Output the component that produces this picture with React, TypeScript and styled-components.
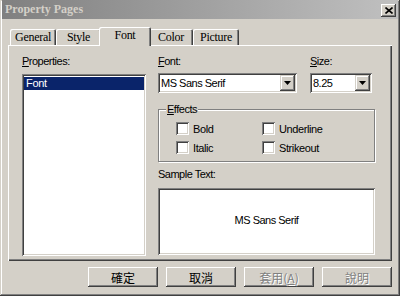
import React from "react";
import styled, { createGlobalStyle } from "styled-components";

const Global = createGlobalStyle`
  html, body { margin: 0; padding: 0; background: #d4d0c8; }
  body { width: 400px; height: 296px; overflow: hidden; }
`;

const ui = `"Liberation Sans", Arial, sans-serif`;
const serif = `"Liberation Serif", "Times New Roman", serif`;
const cjk = `"Noto Sans CJK TC", "Liberation Sans", sans-serif`;

const Window = styled.div`
  box-sizing: border-box;
  width: 400px;
  height: 296px;
  background: #d4d0c8;
  padding: 0 2px 2px 2px;
  box-shadow: inset -1px -1px #404040, inset 1px 1px #d4d0c8,
    inset -2px -2px #808080, inset 2px 2px #fff;
  display: flex;
  flex-direction: column;
`;

const TitleBar = styled.div`
  height: 19px;
  display: flex;
  align-items: flex-start;
  justify-content: space-between;
  padding: 0 2px 0 3px;
  background: linear-gradient(to right, #808080, #c0c0c0);
`;

const Title = styled.span`
  font-family: ${serif};
  font-weight: bold;
  font-size: 12px;
  line-height: 19px;
  color: #d4d0c8;
`;

const CloseButton = styled.div`
  width: 15px;
  height: 13px;
  margin-top: 4px;
  background: #d4d0c8;
  box-shadow: inset -1px -1px #404040, inset 1px 1px #fff,
    inset -2px -2px #808080;
  display: flex;
  align-items: center;
  justify-content: center;
`;

const Body = styled.div`
  display: flex;
  flex-direction: column;
  padding: 8px 6px 0 6px;
`;

const TabStrip = styled.div`
  display: flex;
  align-items: flex-end;
  height: 18px;
  padding-left: 2px;
  position: relative;
  z-index: 1;
`;

const Tab = styled.div<{ $w: number; $active?: boolean }>`
  box-sizing: border-box;
  width: ${(p) => p.$w}px;
  height: ${(p) => (p.$active ? 19 : 16)}px;
  margin: ${(p) => (p.$active ? "0 -2px -1px -2px" : "0")};
  padding-bottom: ${(p) => (p.$active ? 3 : 0)}px;
  background: #d4d0c8;
  border-radius: 2px 2px 0 0;
  box-shadow: inset 1px 1px #fff, inset -1px 0 #404040, inset -2px 0 #808080;
  font-family: ${serif};
  font-size: 12px;
  letter-spacing: -0.3px;
  color: #000;
  display: flex;
  align-items: center;
  justify-content: center;
  position: relative;
  z-index: ${(p) => (p.$active ? 2 : 1)};
`;

const Panel = styled.div`
  box-sizing: border-box;
  height: 216px;
  padding: 10px 0 0 14px;
  display: flex;
  gap: 12px;
  box-shadow: inset 1px 1px #fff, inset -1px -1px #404040,
    inset -2px -2px #808080;
`;

const Column = styled.div<{ $w: number }>`
  width: ${(p) => p.$w}px;
  display: flex;
  flex-direction: column;
`;

const Label = styled.div<{ $mb?: number; $mt?: number }>`
  font-family: ${ui};
  font-size: 11px;
  letter-spacing: -0.5px;
  line-height: 13px;
  height: 13px;
  color: #000;
  margin-top: ${(p) => p.$mt ?? 0}px;
  margin-bottom: ${(p) => p.$mb ?? 0}px;
  white-space: nowrap;
`;

const sunken = `
  background: #fff;
  box-shadow: inset 1px 1px #808080, inset -1px -1px #fff,
    inset 2px 2px #404040, inset -2px -2px #d4d0c8;
`;

const ListBox = styled.div`
  box-sizing: border-box;
  height: 182px;
  padding: 2px;
  ${sunken}
`;

const ListItem = styled.div<{ $selected?: boolean }>`
  height: 13px;
  margin-top: 1px;
  padding-left: 2px;
  font-family: ${ui};
  font-size: 11px;
  letter-spacing: -0.3px;
  line-height: 13px;
  background: ${(p) => (p.$selected ? "#0a246a" : "transparent")};
  color: ${(p) => (p.$selected ? "#fff" : "#000")};
`;

const TopRow = styled.div`
  display: flex;
  gap: 13px;
`;

const Combo = styled.div`
  box-sizing: border-box;
  height: 20px;
  padding: 2px;
  display: flex;
  align-items: center;
  ${sunken}
`;

const ComboText = styled.span`
  flex: 1;
  padding-left: 1px;
  font-family: ${ui};
  font-size: 11px;
  letter-spacing: -0.5px;
  color: #000;
  white-space: nowrap;
`;

const DropButton = styled.div`
  width: 15px;
  height: 16px;
  background: #d4d0c8;
  box-shadow: inset -1px -1px #404040, inset 1px 1px #d4d0c8,
    inset -2px -2px #808080, inset 2px 2px #fff;
  display: flex;
  align-items: center;
  justify-content: center;
`;

const Group = styled.fieldset`
  margin: 10px 0 0 0;
  padding: 0;
  min-inline-size: 0;
  border: 1px solid #808080;
  box-shadow: inset 1px 1px #fff, 1px 1px #fff;
`;

const CheckGrid = styled.div`
  display: grid;
  grid-template-columns: 86px 1fr;
  row-gap: 6px;
  padding: 6px 0 7px 17px;
`;

const Legend = styled.legend`
  margin-left: 7px;
  padding: 0 1px;
  background: #d4d0c8;
  font-family: ${ui};
  font-size: 11px;
  letter-spacing: -0.5px;
  line-height: 13px;
  color: #000;
`;

const CheckItem = styled.label`
  display: flex;
  align-items: center;
  gap: 4px;
  height: 13px;
  font-family: ${ui};
  font-size: 11px;
  letter-spacing: -0.4px;
  color: #000;
`;

const CheckBox = styled.span`
  box-sizing: border-box;
  width: 13px;
  height: 13px;
  flex: none;
  ${sunken}
`;

const SampleBox = styled.div`
  box-sizing: border-box;
  height: 67px;
  margin-top: 7px;
  display: flex;
  align-items: center;
  justify-content: center;
  padding-bottom: 3px;
  font-family: ${ui};
  font-size: 11px;
  letter-spacing: -0.5px;
  color: #000;
  ${sunken}
`;

const ButtonRow = styled.div`
  display: flex;
  justify-content: flex-end;
  gap: 8px;
  margin-top: 6px;
`;

const Button = styled.div<{ $disabled?: boolean }>`
  width: 70px;
  height: 20px;
  background: #d4d0c8;
  box-shadow: inset -1px -1px #404040, inset 1px 1px #fff,
    inset -2px -2px #808080, inset 2px 2px #d4d0c8;
  display: flex;
  align-items: center;
  justify-content: center;
  font-family: ${cjk};
  font-size: 12px;
  color: ${(p) => (p.$disabled ? "#808080" : "#000")};
  text-shadow: ${(p) => (p.$disabled ? "1px 1px #fff" : "none")};
`;

const Arrow = () => (
  <svg width="7" height="4" viewBox="0 0 7 4">
    <path d="M0 0H7L3.5 4Z" fill="#000" />
  </svg>
);

const CloseX = () => (
  <svg width="8" height="7" viewBox="0 0 8 7">
    <path d="M0.5 0.5L7.5 6.5M7.5 0.5L0.5 6.5" stroke="#000" strokeWidth="1.6" />
  </svg>
);

export default function App() {
  return (
    <>
      <Global />
      <Window>
        <TitleBar>
          <Title>Property Pages</Title>
          <CloseButton>
            <CloseX />
          </CloseButton>
        </TitleBar>
        <Body>
          <TabStrip>
            <Tab $w={46}>General</Tab>
            <Tab $w={45}>Style</Tab>
            <Tab $w={52} $active>
              Font
            </Tab>
            <Tab $w={44}>Color</Tab>
            <Tab $w={46}>Picture</Tab>
          </TabStrip>
          <Panel>
            <Column $w={124}>
              <Label $mb={6}>
                <u>P</u>roperties:
              </Label>
              <ListBox>
                <ListItem $selected>Font</ListItem>
              </ListBox>
            </Column>
            <Column $w={217}>
              <TopRow>
                <Column $w={139}>
                  <Label $mb={5}>
                    <u>F</u>ont:
                  </Label>
                  <Combo>
                    <ComboText>MS Sans Serif</ComboText>
                    <DropButton>
                      <Arrow />
                    </DropButton>
                  </Combo>
                </Column>
                <Column $w={62}>
                  <Label $mb={5}>
                    <u>S</u>ize:
                  </Label>
                  <Combo>
                    <ComboText>8.25</ComboText>
                    <DropButton>
                      <Arrow />
                    </DropButton>
                  </Combo>
                </Column>
              </TopRow>
              <Group>
                <Legend>
                  <u>E</u>ffects
                </Legend>
                <CheckGrid>
                  <CheckItem>
                    <CheckBox />
                    Bold
                  </CheckItem>
                  <CheckItem>
                    <CheckBox />
                    Underline
                  </CheckItem>
                  <CheckItem>
                    <CheckBox />
                    Italic
                  </CheckItem>
                  <CheckItem>
                    <CheckBox />
                    Strikeout
                  </CheckItem>
                </CheckGrid>
              </Group>
              <Label $mt={6}>Sample Text:</Label>
              <SampleBox>MS Sans Serif</SampleBox>
            </Column>
          </Panel>
          <ButtonRow>
            <Button>確定</Button>
            <Button>取消</Button>
            <Button $disabled>
              套用(<u>A</u>)
            </Button>
            <Button $disabled>說明</Button>
          </ButtonRow>
        </Body>
      </Window>
    </>
  );
}
